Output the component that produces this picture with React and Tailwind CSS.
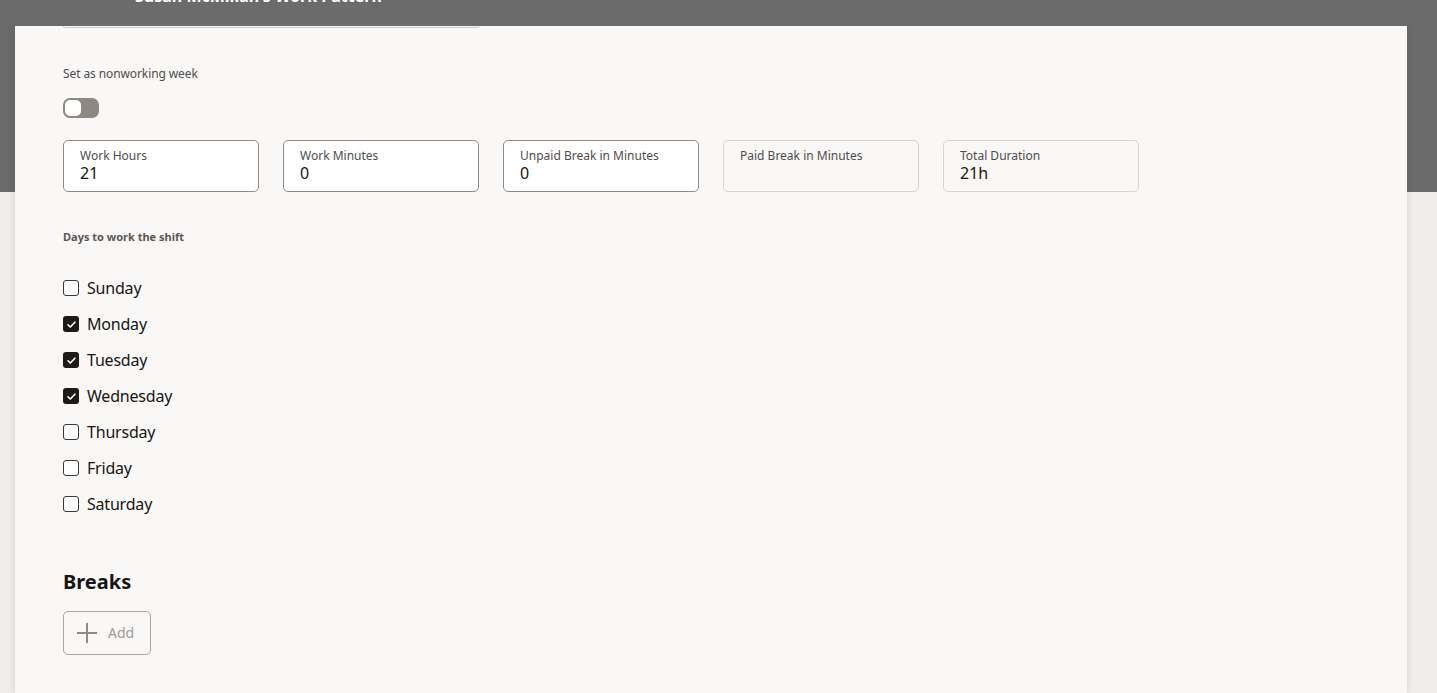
import React from 'react';

const fields = [
  { label: 'Work Hours', value: '21', editable: true },
  { label: 'Work Minutes', value: '0', editable: true },
  { label: 'Unpaid Break in Minutes', value: '0', editable: true },
  { label: 'Paid Break in Minutes', value: '', editable: false },
  { label: 'Total Duration', value: '21h', editable: false },
];

const days = [
  { name: 'Sunday', checked: false },
  { name: 'Monday', checked: true },
  { name: 'Tuesday', checked: true },
  { name: 'Wednesday', checked: true },
  { name: 'Thursday', checked: false },
  { name: 'Friday', checked: false },
  { name: 'Saturday', checked: false },
];

const Field = ({ label, value, editable }) => (
  <div
    className={
      editable
        ? 'w-[196px] h-[52px] rounded-[5px] border border-[#8e8c8a] bg-white px-4 pt-[8px]'
        : 'w-[196px] h-[52px] rounded-[5px] border border-[#d7d4d1] bg-transparent px-4 pt-[8px]'
    }
  >
    <div className="text-[12px] leading-[14px] text-[#4f4d4b]">{label}</div>
    <div className="text-[16px] leading-[20px] text-[#161513]">{value}</div>
  </div>
);

const Day = ({ name, checked }) => (
  <label className="flex items-center h-[36px] gap-[8px]">
    {checked ? (
      <span className="w-[16px] h-[16px] rounded-[3px] bg-[#1c1b19] flex items-center justify-center">
        <svg width="11" height="11" viewBox="0 0 12 12" fill="none">
          <path d="M2.2 6.3l2.5 2.4 5-5.2" stroke="#fff" strokeWidth="1.8" strokeLinecap="round" strokeLinejoin="round" />
        </svg>
      </span>
    ) : (
      <span className="w-[16px] h-[16px] rounded-[3px] border-[1.5px] border-[#3b3937] bg-white" />
    )}
    <span className="text-[16px] tracking-[-0.2px] text-[#161513]">{name}</span>
  </label>
);

export default function App() {
  return (
    <div
      className="min-h-screen bg-[linear-gradient(to_bottom,#6b6b6b_192px,#efeeed_192px)] overflow-hidden"
      style={{ fontFamily: '"Noto Sans", "Open Sans", sans-serif' }}
    >
      <div className="ml-[15px] w-[1392px]">
        <div className="h-[26px] bg-[#6b6b6b] relative overflow-hidden">
          <div className="pl-[120px] -mt-[14px] text-[16px] leading-[20px] font-bold text-white">
            Susan McMillan's Work Pattern
          </div>
        </div>
        <div className="bg-[#f9f8f7] h-[667px] shadow-[0_0_8px_rgba(0,0,0,0.12)] px-[48px]">
          <div className="w-[416px] h-[2px] border-b border-x border-[#cfccc9] rounded-b-[4px]" />
          <div className="pt-[38px] text-[12px] leading-[16px] tracking-[-0.1px] text-[#4f4d4b]">Set as nonworking week</div>
          <div className="mt-[16px] w-[36px] h-[20px] rounded-[7px] bg-[#8e8883] p-[2px]">
            <div className="w-[16px] h-[16px] rounded-[5px] bg-white" />
          </div>
          <div className="mt-[22px] flex gap-[24px]">
            {fields.map((f) => (
              <Field key={f.label} {...f} />
            ))}
          </div>
          <div className="mt-[37px] text-[11px] leading-[16px] font-bold text-[#595755]">Days to work the shift</div>
          <div className="mt-[25px] flex flex-col">
            {days.map((d) => (
              <Day key={d.name} {...d} />
            ))}
          </div>
          <div className="mt-[47px] text-[20px] leading-[26px] font-bold text-[#161513]">Breaks</div>
          <button className="mt-[16px] w-[88px] h-[44px] rounded-[5px] border border-[#a9a7a5] flex items-center pl-[12px] gap-[10px]">
            <svg width="22" height="22" viewBox="0 0 22 22" fill="none">
              <path d="M11 1v20M1 11h20" stroke="#8e8c8a" strokeWidth="2" />
            </svg>
            <span className="text-[14px] leading-[18px] -mt-[1px] text-[#9c9a98]">Add</span>
          </button>
        </div>
      </div>
    </div>
  );
}
